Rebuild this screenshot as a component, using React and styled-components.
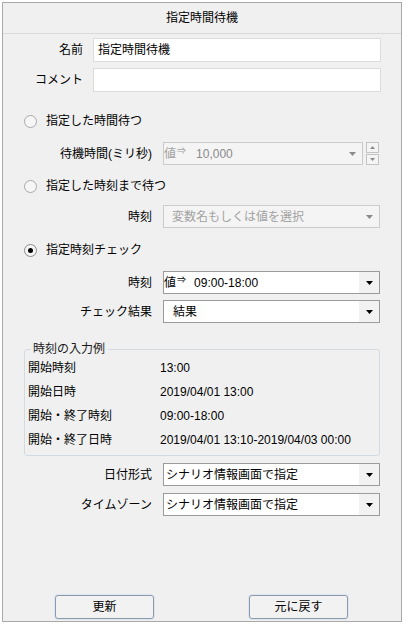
import React from "react";
import styled, { createGlobalStyle } from "styled-components";

const GlobalStyle = createGlobalStyle`
  html, body {
    margin: 0;
    padding: 0;
    background: #ffffff;
  }
  body {
    font-family: "Liberation Sans", "Noto Sans CJK JP", sans-serif;
    font-size: 12px;
    color: #000;
  }
`;

const Window = styled.div`
  box-sizing: border-box;
  margin: 2px 0 0 2px;
  width: 400px;
  height: 620px;
  border: 1px solid #a8a8a8;
  background: #f0f0f0;
  display: flex;
  flex-direction: column;
`;

const TitleBar = styled.div`
  height: 30px;
  border-bottom: 1px solid #d9d9d9;
  display: flex;
  align-items: center;
  justify-content: center;
  line-height: 14px;
`;

const FieldRow = styled.div`
  display: grid;
  grid-template-columns: ${(p) => p.$label}px auto;
  column-gap: ${(p) => p.$gap}px;
  align-items: center;
  margin-top: ${(p) => p.$mt}px;
`;

const Label = styled.label`
  text-align: right;
  line-height: 14px;
  white-space: nowrap;
`;

const TextInput = styled.div`
  box-sizing: border-box;
  width: 288px;
  height: 24px;
  border: 1px solid #dcdcdc;
  background: #fff;
  display: flex;
  align-items: center;
  padding-left: 4px;
  line-height: 14px;
`;

const RadioRow = styled.div`
  display: flex;
  align-items: center;
  height: 20px;
  margin: ${(p) => p.$mt}px 0 0 21px;
  line-height: 14px;
`;

const RadioCircle = styled.span`
  box-sizing: border-box;
  width: 13px;
  height: 13px;
  border-radius: 50%;
  border: 1px solid ${(p) => (p.$checked ? "#8a8a8a" : "#a9a9a9")};
  background: #f6f6f6;
  display: flex;
  align-items: center;
  justify-content: center;
  margin-right: 9px;
  &::after {
    content: "";
    display: ${(p) => (p.$checked ? "block" : "none")};
    width: 5px;
    height: 5px;
    border-radius: 50%;
    background: #000;
  }
`;

const SelectGroup = styled.div`
  display: flex;
  align-items: center;
  gap: 3px;
`;

const Select = styled.div`
  box-sizing: border-box;
  width: ${(p) => p.$w || 217}px;
  height: 23px;
  border: 1px solid ${(p) => (p.$disabled ? "#cbcbcb" : "#9b9b9b")};
  background: ${(p) => (p.$disabled ? "#f4f4f4" : "#ffffff")};
  display: flex;
  align-items: stretch;
`;

const SelectText = styled.span`
  flex: 1;
  display: flex;
  align-items: center;
  padding-left: ${(p) => p.$pad}px;
  color: ${(p) => (p.$muted ? "#a2a2a2" : "#000")};
  line-height: 14px;
  white-space: nowrap;
`;

const Prefix = styled.span`
  color: ${(p) => (p.$muted ? "#a2a2a2" : "#000")};
  margin-right: ${(p) => p.$gap}px;
  display: inline-flex;
  align-items: flex-start;
`;

const Arrowed = styled.span`
  font-size: 9px;
  line-height: 9px;
  margin-left: 1px;
  align-self: flex-start;
`;

const Value = styled.span`
  color: ${(p) => (p.$muted ? "#8a8a8a" : "#000")};
`;

const DropButton = styled.span`
  width: 20px;
  background: ${(p) => (p.$disabled ? "#f4f4f4" : "#f2f2f2")};
  display: flex;
  align-items: center;
  justify-content: center;
`;

const Spinner = styled.div`
  box-sizing: border-box;
  width: 13px;
  height: 23px;
  display: flex;
  flex-direction: column;
  gap: 1px;
`;

const SpinHalf = styled.div`
  flex: 1;
  box-sizing: border-box;
  border: 1px solid #c4c4c4;
  background: #f4f4f4;
  display: flex;
  align-items: center;
  justify-content: center;
`;

const GroupBox = styled.fieldset`
  box-sizing: border-box;
  width: 356px;
  margin: 19px 0 0 21px;
  padding: 0 3px 3px 3px;
  border: 1px solid #d2dbe2;
  border-radius: 3px;
  min-width: 0;
`;

const Legend = styled.legend`
  padding: 0 3px 0 2px;
  margin-left: 3px;
  line-height: 14px;
  color: #1a1a1a;
`;

const ExampleRow = styled.div`
  display: grid;
  grid-template-columns: 132px auto;
  height: 24px;
  align-items: center;
  line-height: 14px;
`;

const ButtonBar = styled.div`
  margin-top: auto;
  padding: 0 0 2px 52px;
  display: flex;
  gap: 95px;
`;

const Button = styled.button`
  box-sizing: border-box;
  width: 99px;
  height: 24px;
  border: 1px solid #8e9aa8;
  border-radius: 3px;
  background: #f2f2f2;
  box-shadow: 0 0 0 1px #dbe6f2;
  font-family: inherit;
  font-size: 12px;
  color: #000;
  line-height: 14px;
  padding: 0;
`;

const DownArrow = ({ color = "#000" }) => (
  <svg width="7" height="4" viewBox="0 0 7 4">
    <polygon points="0,0 7,0 3.5,4" fill={color} />
  </svg>
);

const SpinArrow = ({ up }) => (
  <svg width="5" height="3" viewBox="0 0 5 3">
    <polygon points={up ? "0,3 5,3 2.5,0" : "0,0 5,0 2.5,3"} fill="#8a8a8a" />
  </svg>
);

const ValueSelect = ({ value, disabled, w, valGap }) => (
  <Select $disabled={disabled} $w={w}>
    <SelectText $pad={0}>
      <Prefix $muted={disabled} $gap={valGap}>
        値<Arrowed>⇒</Arrowed>
      </Prefix>
      <Value $muted={disabled}>{value}</Value>
    </SelectText>
    <DropButton $disabled={disabled}>
      <DownArrow color={disabled ? "#8a8a8a" : "#000"} />
    </DropButton>
  </Select>
);

const PlainSelect = ({ text, pad = 2, muted, disabled }) => (
  <Select $disabled={disabled}>
    <SelectText $pad={pad} $muted={muted}>
      {text}
    </SelectText>
    <DropButton $disabled={disabled}>
      <DownArrow color={disabled ? "#8a8a8a" : "#000"} />
    </DropButton>
  </Select>
);

const examples = [
  ["開始時刻", "13:00"],
  ["開始日時", "2019/04/01 13:00"],
  ["開始・終了時刻", "09:00-18:00"],
  ["開始・終了日時", "2019/04/01 13:10-2019/04/03 00:00"],
];

export default function App() {
  return (
    <>
      <GlobalStyle />
      <Window>
        <TitleBar>指定時間待機</TitleBar>

        <FieldRow $label={80} $gap={10} $mt={4}>
          <Label>名前</Label>
          <TextInput>指定時間待機</TextInput>
        </FieldRow>
        <FieldRow $label={80} $gap={10} $mt={6}>
          <Label>コメント</Label>
          <TextInput />
        </FieldRow>

        <RadioRow $mt={19}>
          <RadioCircle />
          指定した時間待つ
        </RadioRow>
        <FieldRow $label={149} $gap={11} $mt={11}>
          <Label>待機時間(ミリ秒)</Label>
          <SelectGroup>
            <ValueSelect value="10,000" disabled w={200} valGap={10} />
            <Spinner>
              <SpinHalf>
                <SpinArrow up />
              </SpinHalf>
              <SpinHalf>
                <SpinArrow />
              </SpinHalf>
            </Spinner>
          </SelectGroup>
        </FieldRow>

        <RadioRow $mt={11}>
          <RadioCircle />
          指定した時刻まで待つ
        </RadioRow>
        <FieldRow $label={149} $gap={11} $mt={9}>
          <Label>時刻</Label>
          <PlainSelect text="変数名もしくは値を選択" pad={8} muted disabled />
        </FieldRow>

        <RadioRow $mt={12}>
          <RadioCircle $checked />
          指定時刻チェック
        </RadioRow>
        <FieldRow $label={149} $gap={11} $mt={11}>
          <Label>時刻</Label>
          <ValueSelect value="09:00-18:00" valGap={8} />
        </FieldRow>
        <FieldRow $label={149} $gap={11} $mt={6}>
          <Label>チェック結果</Label>
          <PlainSelect text="結果" pad={9} />
        </FieldRow>

        <GroupBox>
          <Legend>時刻の入力例</Legend>
          {examples.map(([k, v]) => (
            <ExampleRow key={k}>
              <span>{k}</span>
              <span>{v}</span>
            </ExampleRow>
          ))}
        </GroupBox>

        <FieldRow $label={149} $gap={11} $mt={7}>
          <Label>日付形式</Label>
          <PlainSelect text="シナリオ情報画面で指定" pad={2} />
        </FieldRow>
        <FieldRow $label={149} $gap={11} $mt={7}>
          <Label>タイムゾーン</Label>
          <PlainSelect text="シナリオ情報画面で指定" pad={2} />
        </FieldRow>

        <ButtonBar>
          <Button>更新</Button>
          <Button>元に戻す</Button>
        </ButtonBar>
      </Window>
    </>
  );
}
